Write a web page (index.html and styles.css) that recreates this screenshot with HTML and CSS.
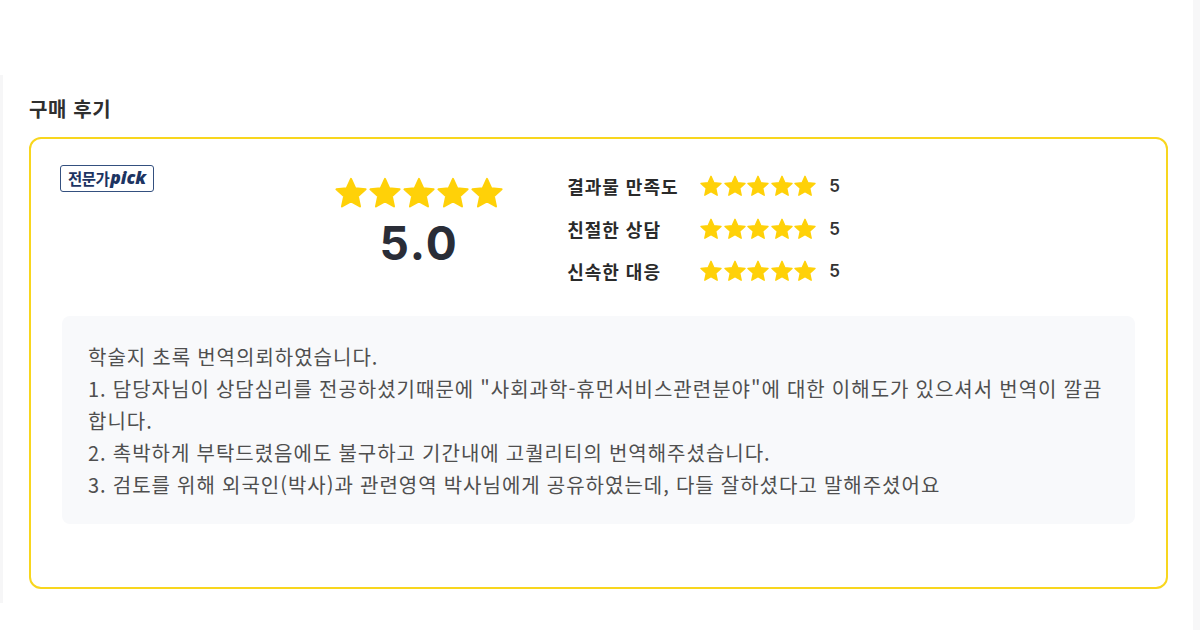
FILE: index.html
```html
<!DOCTYPE html>
<html lang="ko">
<head>
<meta charset="utf-8">
<title>구매 후기</title>
<link rel="stylesheet" href="styles.css">
</head>
<body>
<svg class="defs" width="0" height="0" aria-hidden="true">
  <symbol id="star" viewBox="0 0 24 24">
    <path d="M12 1.4L15.17 8.43 22.94 9.25 17.14 14.47 18.76 22.1 12 18.2 5.24 22.1 6.86 14.47 1.06 9.25 8.83 8.43z" fill="#ffd108" stroke="#ffd108" stroke-width="1.5" stroke-linejoin="round"/>
  </symbol>
</svg>
<div class="page">
  <main class="panel">
    <h2 class="title">구매 후기</h2>
    <section class="card">
      <div class="badge"><span class="badge-ko">전문가</span><span class="badge-en">pick</span></div>
      <div class="summary">
        <div class="score">
          <div class="stars big">
            <svg><use href="#star"/></svg><svg><use href="#star"/></svg><svg><use href="#star"/></svg><svg><use href="#star"/></svg><svg><use href="#star"/></svg>
          </div>
          <div class="score-num">5.0</div>
        </div>
        <div class="ratings">
          <div class="row">
            <span class="label">결과물 만족도</span>
            <span class="stars small"><svg><use href="#star"/></svg><svg><use href="#star"/></svg><svg><use href="#star"/></svg><svg><use href="#star"/></svg><svg><use href="#star"/></svg></span>
            <span class="num">5</span>
          </div>
          <div class="row">
            <span class="label">친절한 상담</span>
            <span class="stars small"><svg><use href="#star"/></svg><svg><use href="#star"/></svg><svg><use href="#star"/></svg><svg><use href="#star"/></svg><svg><use href="#star"/></svg></span>
            <span class="num">5</span>
          </div>
          <div class="row">
            <span class="label">신속한 대응</span>
            <span class="stars small"><svg><use href="#star"/></svg><svg><use href="#star"/></svg><svg><use href="#star"/></svg><svg><use href="#star"/></svg><svg><use href="#star"/></svg></span>
            <span class="num">5</span>
          </div>
        </div>
      </div>
      <div class="review">
        <p>학술지 초록 번역의뢰하였습니다.</p>
        <p>1. 담당자님이 상담심리를 전공하셨기때문에 "사회과학-휴먼서비스관련분야"에 대한 이해도가 있으셔서 번역이 깔끔 합니다.</p>
        <p>2. 촉박하게 부탁드렸음에도 불구하고 기간내에 고퀄리티의 번역해주셨습니다.</p>
        <p>3. 검토를 위해 외국인(박사)과 관련영역 박사님에게 공유하였는데, 다들 잘하셨다고 말해주셨어요</p>
      </div>
    </section>
  </main>
  <div class="scrollbar"></div>
</div>
</body>
</html>
```

FILE: styles.css
```css
* { box-sizing: border-box; }
html, body { margin: 0; padding: 0; background: #fff; }
body {
  font-family: "Noto Sans CJK KR", "Noto Sans", sans-serif;
  color: #333;
  width: 1200px;
  height: 630px;
  overflow: hidden;
}
.defs { position: absolute; }
.page { display: flex; height: 630px; }
.panel {
  flex: 1;
  margin-top: 75px;
  height: 528px;
  border-left: 3px solid #f6f6f7;
  padding: 21px 25px 0 26px;
}
.scrollbar { width: 7px; background: #f7f7f8; }
.title {
  margin: 0 0 15px;
  font-size: 20px;
  line-height: 26px;
  font-weight: 700;
  color: #2f2f2f;
  letter-spacing: 0.6px;
}
.card {
  position: relative;
  border: 2px solid #f8d61e;
  border-radius: 12px;
  padding: 26px 31px 63px;
}
.badge {
  position: absolute;
  top: 26px;
  left: 29px;
  width: 94px;
  height: 27px;
  border: 1.5px solid #34507f;
  border-radius: 3px;
  display: flex;
  align-items: center;
  justify-content: center;
  color: #1c3462;
  font-weight: 700;
  line-height: 1;
}
.badge-ko { font-size: 15.5px; letter-spacing: -0.5px; }
.badge-en {
  font-family: "Open Sans", "Noto Sans", sans-serif;
  font-style: italic;
  font-weight: 800;
  font-size: 17.5px;
  margin-left: 1px;
  margin-bottom: 1px;
}
.summary {
  display: flex;
  justify-content: center;
  gap: 64px;
  padding-right: 22px;
}
.score {
  display: flex;
  flex-direction: column;
  align-items: center;
  padding-top: 12px;
}
.stars { display: flex; }
.stars svg { display: block; }
.stars.big { gap: 2px; }
.stars.big svg { width: 32px; height: 32px; }
.score-num {
  font-family: "Inter", "Liberation Sans", sans-serif;
  font-weight: 700;
  font-size: 46px;
  line-height: 54px;
  color: #2a2d37;
  letter-spacing: 2px;
  margin-top: 7px;
}
.ratings { display: flex; flex-direction: column; }
.row {
  display: flex;
  align-items: center;
  height: 42.5px;
}
.label {
  width: 133px;
  font-size: 18px;
  font-weight: 700;
  color: #2a2a2a;
  letter-spacing: 1px;
  white-space: nowrap;
}
.stars.small { gap: 1.5px; }
.stars.small svg { width: 22px; height: 22px; }
.num {
  margin-left: 13px;
  font-family: "Inter", "Liberation Sans", sans-serif;
  font-size: 17px;
  font-weight: 600;
  color: #333;
}
.review {
  margin-top: 23px;
  background: #f8f9fb;
  border-radius: 8px;
  padding: 25px 16px 23px 26px;
}
.review p {
  margin: 0;
  font-size: 20px;
  line-height: 32px;
  color: #4f4f4f;
  letter-spacing: 1px;
  word-spacing: -0.5px;
}
```
